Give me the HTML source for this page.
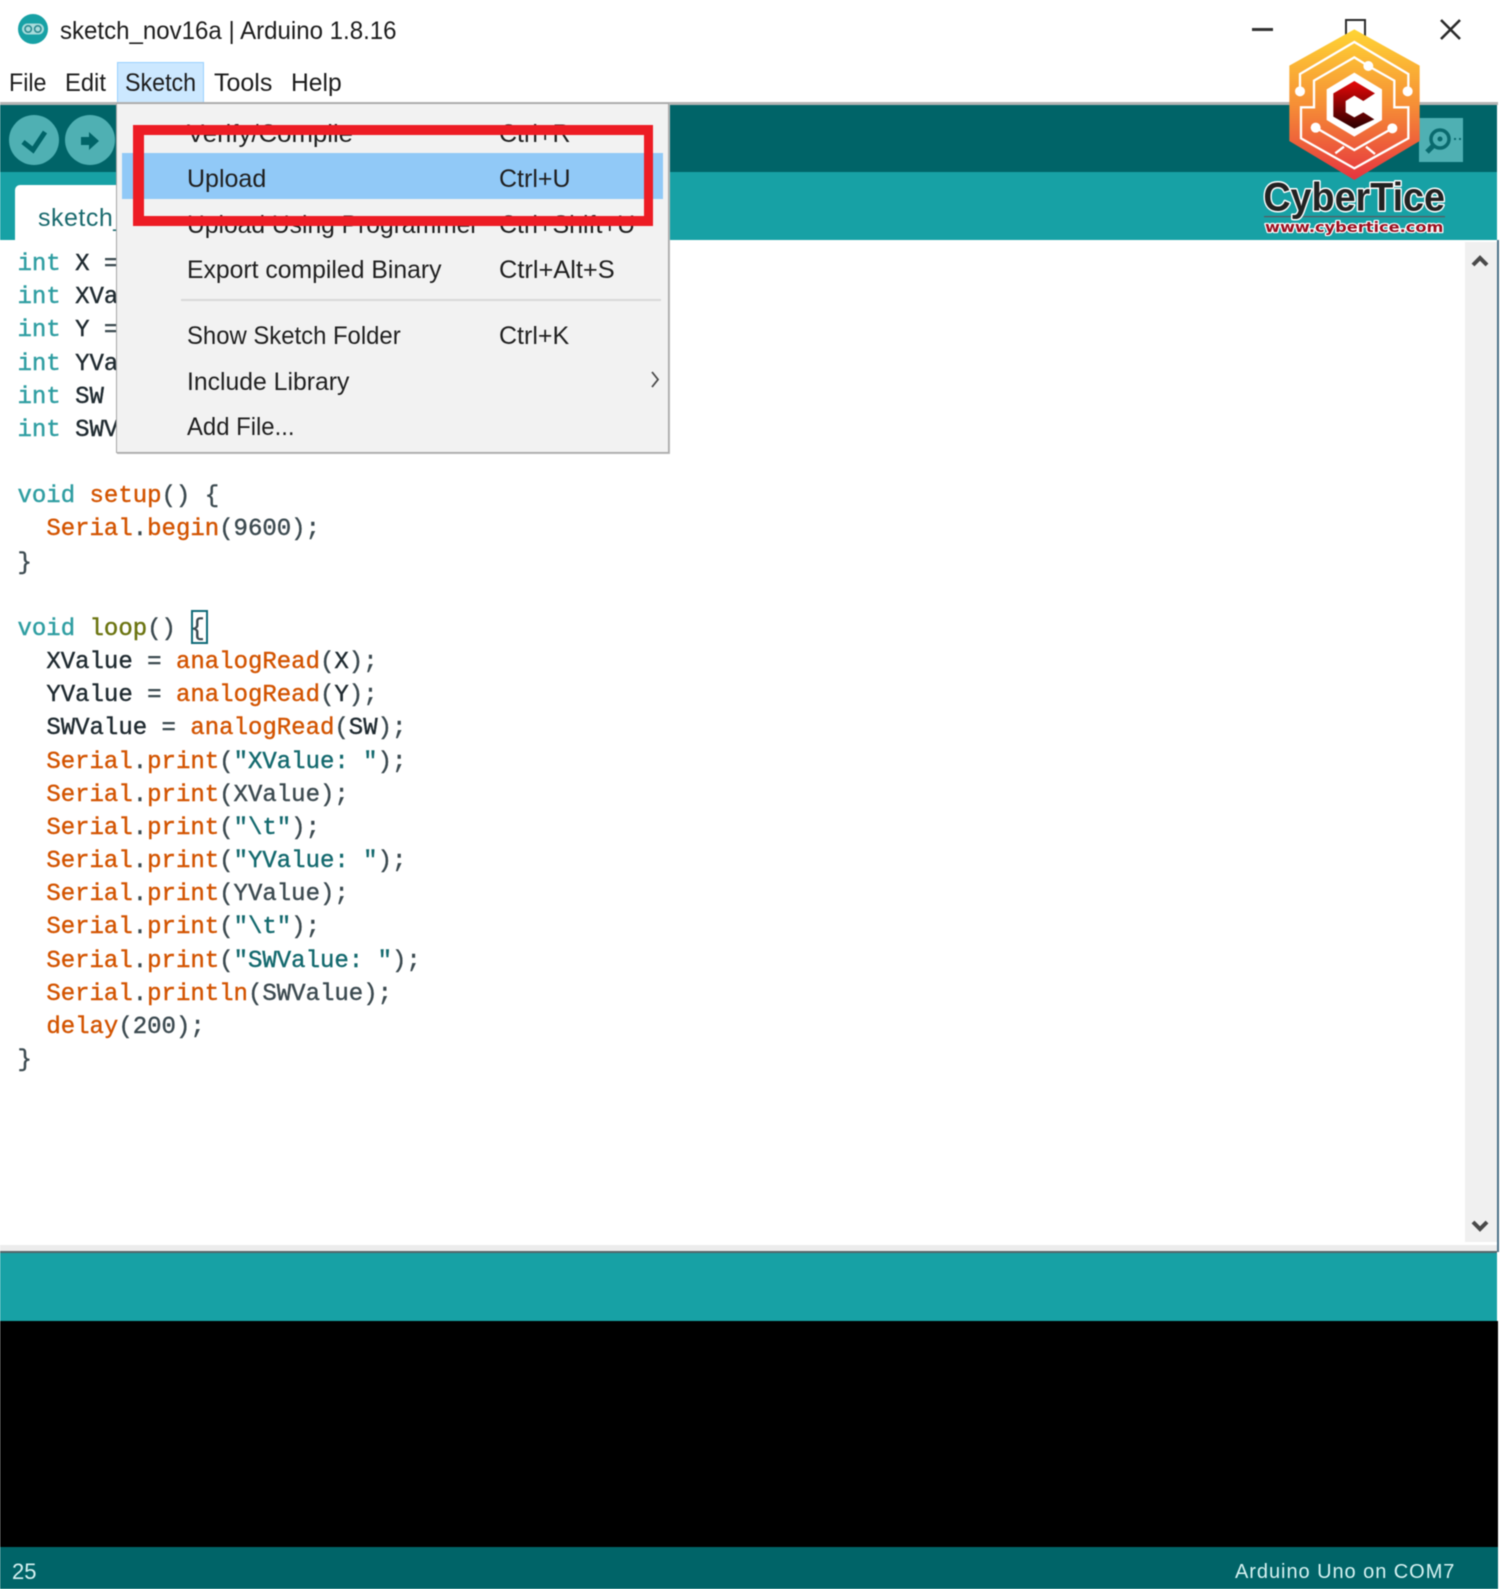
<!DOCTYPE html>
<html lang="en"><head><meta charset="utf-8"><title>sketch_nov16a | Arduino 1.8.16</title>
<style>
html,body{margin:0;padding:0;background:#fff}
#p{position:relative;width:1500px;height:1589px;overflow:hidden;background:#fff;font-family:"Liberation Sans",sans-serif;filter:blur(.5px)}
#p>div,.a{position:absolute}
.t{position:absolute;white-space:pre;color:#1c1c1c;line-height:1;font-size:25px;transform-origin:0 100%}
.n{transform:scaleX(.93)}
.c{position:absolute;left:17.5px;white-space:pre;font-family:"Liberation Mono",monospace;font-size:24px;line-height:33.17px;color:#3c4a50;-webkit-text-stroke:.4px currentColor}
.k{color:#2f9ea2}.o{color:#d35400}.l{color:#6b7410}.s{color:#13696e}.b{color:#1f2a30}
.m{font-size:25px;color:#1f1f1f}
</style></head><body><div id="p">

<svg class="a" style="left:18px;top:14px" width="30" height="30" viewBox="0 0 30 30"><circle cx="15" cy="15" r="15" fill="#17a1a5"/><rect x="4" y="9.5" width="22" height="11" rx="5.5" fill="#a8dcdc"/><circle cx="10.2" cy="15" r="3.2" fill="none" stroke="#2a8a90" stroke-width="1.6"/><circle cx="19.8" cy="15" r="3.2" fill="none" stroke="#2a8a90" stroke-width="1.6"/></svg>
<div class="t" style="left:60px;top:19px;transform:scaleX(.962)">sketch_nov16a | Arduino 1.8.16</div>

<div style="left:117px;top:62px;width:85px;height:39px;background:#cce8ff;border:1px solid #99d1ff"></div>
<div class="t n" style="left:9px;top:71px">File</div>
<div class="t n" style="left:65px;top:71px;transform:scaleX(.95)">Edit</div>
<div class="t n" style="left:125px;top:71px">Sketch</div>
<div class="t n" style="left:214px;top:71px;transform:scaleX(1)">Tools</div>
<div class="t n" style="left:291px;top:71px;transform:scaleX(.985)">Help</div>

<div style="left:0;top:102px;width:1498px;height:3px;background:#b4b4b4"></div>
<div style="left:0;top:105px;width:1497px;height:67px;background:#006468"></div>
<div style="left:0;top:172px;width:1497px;height:68px;background:#17a1a5"></div>
<div style="left:15px;top:185px;width:300px;height:55px;background:#fff;border-top-left-radius:5px"></div>
<div class="t" style="left:38px;top:206px;color:#1a6a6e;letter-spacing:.5px">sketch_nov16a</div>

<svg class="a" style="left:0;top:105px" width="130" height="67" viewBox="0 0 130 67">
<circle cx="34" cy="35" r="25" fill="#4fb0b3"/><circle cx="90" cy="35" r="25" fill="#4fb0b3"/>
<path d="M23 37l10 8 12-18" fill="none" stroke="#006468" stroke-width="5"/>
<path d="M81 32h8v-5l10 9-10 9v-5h-8z" fill="#006468"/></svg>

<div style="left:1465px;top:242px;width:32px;height:1000px;background:#f0f0f0"></div>
<div style="left:1497px;top:240px;width:2px;height:1012px;background:#4c7288"></div>
<svg class="a" style="left:1464px;top:250px" width="32" height="20"><path d="M9 15l7-7 7 7" fill="none" stroke="#4a4a4a" stroke-width="4"/></svg>
<svg class="a" style="left:1464px;top:1216px" width="32" height="20"><path d="M9 6l7 7 7-7" fill="none" stroke="#4a4a4a" stroke-width="4"/></svg>

<div class="c" style="top:248px;"><span class="k">int</span> <span class="b">X</span> = A0;
<span class="k">int</span> <span class="b">XValue</span> = 0;
<span class="k">int</span> <span class="b">Y</span> = A1;
<span class="k">int</span> <span class="b">YValue</span> = 0;
<span class="k">int</span> <span class="b">SW</span> = 2;
<span class="k">int</span> <span class="b">SWValue</span> = 0;

<span class="k">void</span> <span class="o">setup</span>() {
  <span class="o">Serial</span>.<span class="o">begin</span>(9600);
}

<span class="k">void</span> <span class="l">loop</span>() {
  <span class="b">XValue</span> = <span class="o">analogRead</span>(<span class="b">X</span>);
  <span class="b">YValue</span> = <span class="o">analogRead</span>(<span class="b">Y</span>);
  <span class="b">SWValue</span> = <span class="o">analogRead</span>(<span class="b">SW</span>);
  <span class="o">Serial</span>.<span class="o">print</span>(<span class="s">"XValue: "</span>);
  <span class="o">Serial</span>.<span class="o">print</span>(XValue);
  <span class="o">Serial</span>.<span class="o">print</span>(<span class="s">"\t"</span>);
  <span class="o">Serial</span>.<span class="o">print</span>(<span class="s">"YValue: "</span>);
  <span class="o">Serial</span>.<span class="o">print</span>(YValue);
  <span class="o">Serial</span>.<span class="o">print</span>(<span class="s">"\t"</span>);
  <span class="o">Serial</span>.<span class="o">print</span>(<span class="s">"SWValue: "</span>);
  <span class="o">Serial</span>.<span class="o">println</span>(SWValue);
  <span class="o">delay</span>(200);
}</div>
<div style="left:191px;top:610px;width:13px;height:30px;border:2px solid #0f6a78"></div>

<div style="left:116px;top:103px;width:551px;height:348px;background:#f2f2f2;border:1px solid #a6a6a6;box-shadow:1px 1px 0 #bbb"></div>
<div style="left:122px;top:153px;width:541px;height:46px;background:#91c9f7"></div>
<div style="left:181px;top:299px;width:480px;height:2px;background:#d8d8d8"></div>
<div class="t m" style="left:187px;top:122px;transform:scaleX(1.03)">Verify/Compile</div><div class="t m" style="left:499px;top:122px">Ctrl+R</div>
<div class="t m" style="left:187px;top:167px">Upload</div><div class="t m" style="left:499px;top:167px">Ctrl+U</div>
<div class="t m" style="left:187px;top:213px;transform:scaleX(.985)">Upload Using Programmer</div><div class="t m" style="left:499px;top:213px">Ctrl+Shift+U</div>
<div class="t m" style="left:187px;top:258px;transform:scaleX(.99)">Export compiled Binary</div><div class="t m" style="left:499px;top:258px;transform:scaleX(1.015)">Ctrl+Alt+S</div>
<div class="t m" style="left:187px;top:324px;transform:scaleX(.955)">Show Sketch Folder</div><div class="t m" style="left:499px;top:324px">Ctrl+K</div>
<div class="t m" style="left:187px;top:370px;transform:scaleX(.99)">Include Library</div>
<div class="t m" style="left:187px;top:415px;transform:scaleX(.955)">Add File...</div>
<svg class="a" style="left:648px;top:370px" width="14" height="20"><path d="M4 2l6 7.500-6 7.500" fill="none" stroke="#4a4a4a" stroke-width="1.800"/></svg>

<div style="left:133px;top:125px;width:500px;height:81px;border:solid #ed1c24;border-width:10px 9px 10px 11px"></div>

<div style="left:1252px;top:28px;width:21px;height:3px;background:#333"></div>
<div style="left:1345px;top:19px;width:17px;height:30px;border:2px solid #2a2a2a"></div>
<svg class="a" style="left:1438px;top:17px" width="26" height="25"><path d="M3 3l19 19M22 3L3 22" stroke="#2a2a2a" stroke-width="2.600"/></svg>

<div style="left:1419px;top:118px;width:44px;height:44px;background:#4fb0b3"></div>
<svg class="a" style="left:1421px;top:118px" width="42" height="44"><circle cx="19" cy="21" r="9" fill="none" stroke="#0a6a6e" stroke-width="3.500"/><circle cx="19" cy="21" r="2.500" fill="#0a6a6e"/><path d="M12 28l-6 6" stroke="#0a6a6e" stroke-width="5"/><path d="M33 21h2M38 21h2" stroke="#0a6a6e" stroke-width="2"/></svg>

<svg class="a" style="left:1200px;top:0" width="300" height="300" viewBox="0 0 900 900">
<defs>
<linearGradient id="h" x1="0" y1="0" x2="0" y2="1"><stop offset="0" stop-color="#ffd534"/><stop offset=".5" stop-color="#f68f36"/><stop offset="1" stop-color="#e6343f"/></linearGradient>
<linearGradient id="r" x1="0" y1="0" x2="0" y2="1"><stop offset="0" stop-color="#e80808"/><stop offset="1" stop-color="#2a0000"/></linearGradient>
</defs>
<polygon points="463,88 659,197 659,423 463,540 268,423 268,197" fill="url(#h)"/>
<g fill="none" stroke="#fff" stroke-width="7">
<path d="M300 275V222L463 126 625 222V275"/>
<path d="M505 198L463 172 342 242V322H303V415L463 505 625 415V322H583V242L505 198"/>
<path d="M347 383L463 450 577 385"/>
<path d="M406 460L432 440M525 462L498 440"/>
</g>
<g fill="#fff"><circle cx="300" cy="274" r="15"/><circle cx="623" cy="274" r="15"/><circle cx="505" cy="198" r="15"/><circle cx="347" cy="383" r="15"/><circle cx="577" cy="385" r="15"/></g>
<polygon points="463,218 546,268 546,360 463,410 380,360 380,268" fill="#fff"/>
<polygon points="463,243 525,280 490,303 463,287 437,303 437,337 463,352 490,337 523,358 463,386 400,350 400,280" fill="url(#r)"/>
<line x1="192" y1="650" x2="735" y2="650" stroke="#6b4a50" stroke-width="3"/>
<text x="190" y="632" textLength="545" lengthAdjust="spacingAndGlyphs" font-family="Liberation Sans,sans-serif" font-weight="700" font-size="120" fill="#222" stroke="#fff" stroke-width="9" paint-order="stroke" stroke-linejoin="round">CyberTice</text>
<text x="195" y="696" textLength="535" lengthAdjust="spacingAndGlyphs" font-family="DejaVu Sans,sans-serif" font-weight="700" font-size="42" fill="#9a1020" stroke="#fff" stroke-width="7" paint-order="stroke" stroke-linejoin="round">www.cybertice.com</text>
</svg>

<div style="left:0;top:1245px;width:1497px;height:6px;background:#ececec"></div>
<div style="left:0;top:1251px;width:1497px;height:2px;background:#55666a"></div>
<div style="left:0;top:1253px;width:1497px;height:68px;background:#17a1a5"></div>
<div style="left:0;top:1321px;width:1498px;height:226px;background:#000"></div>
<div style="left:0;top:1547px;width:1498px;height:42px;background:#006468"></div>
<div class="t" style="left:12px;top:1561px;color:#d6f2f2;font-size:22px">25</div>
<div class="t" style="left:1235px;top:1562px;color:#d6f2f2;font-size:20px;letter-spacing:.95px">Arduino Uno on COM7</div>
</div></body></html>
